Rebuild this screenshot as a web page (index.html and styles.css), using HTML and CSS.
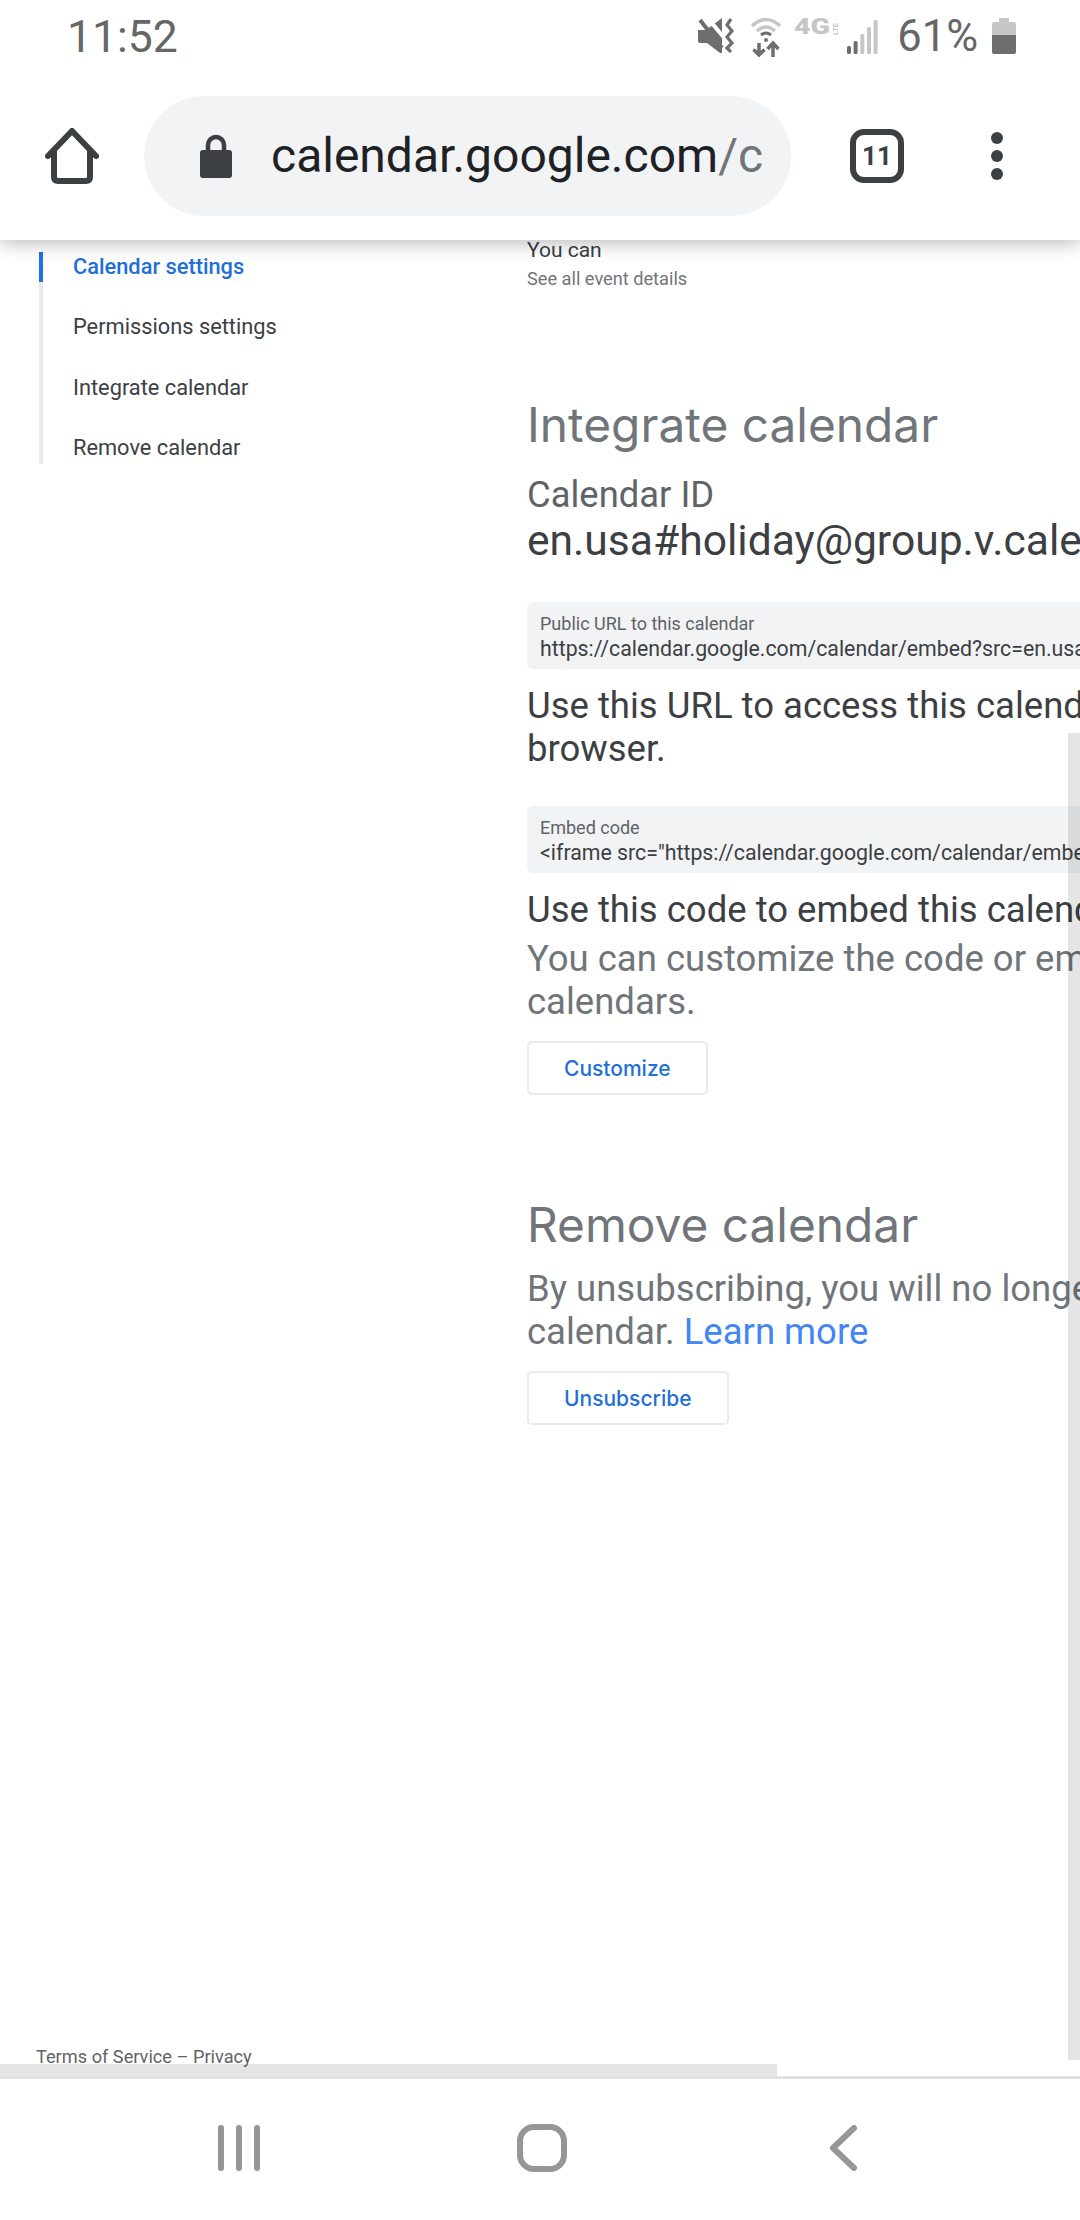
FILE: index.html
```html
<!DOCTYPE html>
<html lang="en">
	<head>
		<meta charset="UTF-8" />
		<meta name="viewport" content="width=device-width, initial-scale=1.0" />
		<title>Calendar settings</title>
		<link rel="stylesheet" href="styles.css">
	</head>
	<body>
		<header class="browser-top">
			<div class="status-bar">
				<span class="clock">11:52</span>
				<div class="status-icons">
					<svg class="icon-mute" width="36" height="35" viewBox="0 0 36 35">
						<path d="M0 12 H8 L24 0 V35 H22 L9 25 H2 Q0 25 0 23 Z" fill="#6e6e6e" />
						<path d="M8 -2 L28 22" stroke="#fff" stroke-width="4" />
						<path d="M2 2 L24 30" stroke="#6e6e6e" stroke-width="4" />
						<path d="M33 1 L29 7 L34 13 L29 19 L34 25 L29 30 L33 34" fill="none" stroke="#6e6e6e" stroke-width="3.2" />
					</svg>
					<svg class="icon-wifi" width="32" height="41" viewBox="0 0 32 41">
						<path d="M2 10 Q16 -3 30 10" fill="none" stroke="#c6c6c6" stroke-width="3.5" />
						<path d="M7 15 Q16 7 25 15" fill="none" stroke="#c6c6c6" stroke-width="3.5" />
						<path d="M11 19 Q16 15 21 19" fill="none" stroke="#6e6e6e" stroke-width="3" />
						<circle cx="16" cy="24" r="2" fill="#6e6e6e" />
						<path d="M9 27 V39 M3.5 33.5 L9 39 L14.500 33.5" fill="none" stroke="#6e6e6e" stroke-width="3.500" />
						<path d="M23 41 V28 M17.5 33 L23 27 L28.500 33" fill="none" stroke="#6e6e6e" stroke-width="3.500" />
					</svg>
					<div class="network-type">
						<span class="network-4g">4G</span>
						<span class="network-lte">LTE</span>
					</div>
					<svg class="icon-signal" width="31" height="34" viewBox="0 0 31 34">
						<rect x="0" y="26" width="4" height="8" rx="1.5" fill="#6e6e6e" />
						<rect x="6.6" y="21" width="4" height="13" rx="1.500" fill="#6e6e6e" />
						<rect x="13.300" y="14" width="4" height="20" rx="1.500" fill="#c6c6c6" />
						<rect x="20" y="7" width="4" height="27" rx="1.500" fill="#c6c6c6" />
						<rect x="26.600" y="0" width="4" height="34" rx="1.500" fill="#c6c6c6" />
					</svg>
					<span class="battery-level">61%</span>
					<svg class="icon-battery" width="24" height="36" viewBox="0 0 24 36">
						<path d="M7 0 H17 V4 H22 Q24 4 24 6 V17 H0 V6 Q0 4 2 4 H7 Z" fill="#c6c6c6" />
						<path d="M0 17 H24 V34 Q24 36 22 36 H2 Q0 36 0 34 Z" fill="#6e6e6e" />
					</svg>
				</div>
			</div>
			<div class="toolbar">
				<svg class="icon-home" width="54" height="56" viewBox="0 0 54 56">
					<path d="M3 28 L27 3 L51 28 M9 23 V49 Q9 53 13 53 H41 Q45 53 45 49 V23" fill="none" stroke="#3c4043" stroke-width="6" stroke-linecap="round" stroke-linejoin="round" />
				</svg>
				<div class="address-bar">
					<svg class="icon-lock" width="32" height="44" viewBox="0 0 32 44">
						<path d="M8 18 V11 A8 8 0 0 1 24 11 V18" fill="none" stroke="#3c4043" stroke-width="4.500" />
						<rect x="0" y="16" width="32" height="28" rx="3" fill="#3c4043" />
					</svg>
					<span class="url">calendar.google.com<span class="url-rest">/c</span></span>
				</div>
				<div class="tab-count">11</div>
				<div class="menu-dots">
					<span class="dot"></span>
					<span class="dot"></span>
					<span class="dot"></span>
				</div>
			</div>
		</header>

		<div class="page">
			<aside class="sidebar">
				<nav class="side-nav">
					<a class="side-link active">Calendar settings</a>
					<a class="side-link">Permissions settings</a>
					<a class="side-link">Integrate calendar</a>
					<a class="side-link">Remove calendar</a>
				</nav>
				<div class="legal">Terms of Service – Privacy</div>
			</aside>

			<main class="content">
				<div class="you-can">You can</div>
				<div class="you-can-detail">See all event details</div>

				<section class="section-integrate">
					<h2 class="section-title">Integrate calendar</h2>
					<div class="field-label">Calendar ID</div>
					<div class="calendar-id">en.usa#holiday@group.v.calendar.google.com</div>

					<div class="copy-box">
						<div class="copy-label">Public URL to this calendar</div>
						<div class="copy-value">https://calendar.google.com/calendar/embed?src=en.usa%23holiday%40group.v.calendar.google.com</div>
					</div>
					<p class="help-strong">Use this URL to access this calendar from a web browser.</p>

					<div class="copy-box embed-box">
						<div class="copy-label">Embed code</div>
						<div class="copy-value">&lt;iframe src="https://calendar.google.com/calendar/embed?src=en.usa%23holiday%40group.v.calendar.google.com"</div>
					</div>
					<p class="help-strong help-embed">Use this code to embed this calendar in a web page.</p>
					<p class="help-muted">You can customize the code or embed multiple calendars.</p>
					<button class="outline-btn">Customize</button>
				</section>

				<section class="section-remove">
					<h2 class="section-title">Remove calendar</h2>
					<p class="help-muted remove-text">By unsubscribing, you will no longer have access to this calendar. <a class="learn-more">Learn more</a></p>
					<button class="outline-btn">Unsubscribe</button>
				</section>
			</main>

			<div class="scrollbar-v"></div>
			<div class="scrollbar-h"></div>
		</div>

		<footer class="nav-bar">
			<svg width="42" height="46" viewBox="0 0 42 46">
				<path d="M3 3 V43 M21 3 V43 M39 3 V43" stroke="#969696" stroke-width="6" stroke-linecap="round" />
			</svg>
			<svg class="nav-home" width="50" height="48" viewBox="0 0 50 48">
				<rect x="3" y="3" width="44" height="42" rx="14" fill="none" stroke="#969696" stroke-width="6" />
			</svg>
			<svg width="28" height="46" viewBox="0 0 28 46">
				<path d="M25 3 L4 23 L25 43" fill="none" stroke="#969696" stroke-width="6" stroke-linecap="round" stroke-linejoin="round" />
			</svg>
		</footer>
	</body>
</html>
```
FILE: styles.css
```css
* {
	box-sizing: border-box;
}

body {
	margin: 0;
	width: 1080px;
	height: 2220px;
	overflow: hidden;
	background: #fff;
	font-family: Roboto, sans-serif;
	color: #3c4043;
}

.browser-top {
	position: relative;
	z-index: 2;
	height: 240px;
	background: #fff;
	box-shadow: 0 3px 18px rgba(0, 0, 0, 0.28);
}

.status-bar {
	display: flex;
	align-items: flex-start;
	height: 72px;
	padding: 10px 0 0 67px;
}

.clock {
	font-size: 44.5px;
	line-height: 54px;
	color: #666;
}

.status-icons {
	display: flex;
	align-items: flex-start;
	margin-left: auto;
	padding-right: 64px;
}

.icon-mute {
	margin-top: 8px;
}

.icon-wifi {
	margin: 6px 0 0 16px;
}

.network-type {
	display: flex;
	margin: 4px 0 0 12px;
	width: 45px;
	color: #c6c6c6;
}

.network-4g {
	flex: none;
	width: 38px;
	font-size: 22px;
	line-height: 26px;
	font-weight: 900;
	transform: scaleX(1.3);
	transform-origin: left center;
}

.network-lte {
	writing-mode: vertical-rl;
	transform: rotate(180deg);
	font-size: 7.5px;
	line-height: 7px;
	height: 16px;
	margin-top: 5px;
	font-weight: 700;
}

.icon-signal {
	margin: 10px 0 0 8px;
}

.battery-level {
	margin-left: 19px;
	font-size: 43.5px;
	line-height: 54px;
	color: #666;
}

.icon-battery {
	margin: 8px 0 0 14px;
}

.toolbar {
	display: flex;
	align-items: center;
	height: 168px;
	padding: 0 0 0 45px;
}

.address-bar {
	display: flex;
	align-items: center;
	width: 647px;
	height: 120px;
	margin-left: 45px;
	padding-left: 56px;
	background: #f1f3f4;
	border-radius: 60px;
}

.url {
	margin-left: 39px;
	font-size: 48px;
	line-height: 54px;
	color: #202124;
	white-space: nowrap;
}

.url-rest {
	color: #70757a;
}

.tab-count {
	width: 54px;
	height: 54px;
	margin-left: 59px;
	border: 6px solid #3c4043;
	border-radius: 14px;
	font-size: 26px;
	font-weight: 700;
	line-height: 42px;
	text-align: center;
}

.menu-dots {
	display: flex;
	flex-direction: column;
	gap: 6px;
	margin-left: 87px;
}

.dot {
	width: 12px;
	height: 12px;
	border-radius: 50%;
	background: #3c4043;
}

.page {
	position: relative;
	display: flex;
	height: 1836px;
	overflow: hidden;
}

.sidebar {
	display: flex;
	flex-direction: column;
	flex: none;
	width: 527px;
}

.side-nav {
	display: flex;
	flex-direction: column;
	flex: none;
	margin: 12px 0 0 39px;
	height: 212px;
	border-left: 4px solid #e8eaed;
}

.side-link {
	position: relative;
	flex: none;
	height: 60.3px;
	padding-left: 30px;
	font-size: 21.8px;
	line-height: 30px;
	color: #3c4043;
}

.side-link.active {
	font-weight: 500;
	color: #1f6fd8;
}

.side-link.active::before {
	content: '';
	position: absolute;
	left: -4px;
	top: 0;
	width: 4px;
	height: 30px;
	background: #1a73e8;
}

.legal {
	margin: auto 0 7px 36px;
	font-size: 18.2px;
	line-height: 24px;
	color: #5f6368;
}

.content {
	flex: none;
	width: 860px;
}

.you-can {
	font-size: 21px;
	line-height: 20px;
}

.you-can-detail {
	margin-top: 7px;
	font-size: 18.2px;
	line-height: 24px;
	color: #70757a;
}

.section-integrate {
	margin-top: 106px;
}

.section-title {
	margin: 0;
	font-family: Inter, Roboto, sans-serif;
	font-size: 47.8px;
	line-height: 56px;
	font-weight: 400;
	color: #70757a;
}

.field-label {
	margin-top: 20px;
	font-size: 36.4px;
	line-height: 44px;
	color: #5f6368;
}

.calendar-id {
	font-size: 42.6px;
	line-height: 47px;
	white-space: nowrap;
}

.copy-box {
	margin-top: 38px;
	height: 67px;
	padding: 9px 0 0 13px;
	background: #f1f3f4;
	border-radius: 6px 0 0 6px;
	white-space: nowrap;
}

.copy-label {
	font-size: 18px;
	line-height: 25px;
	color: #5f6368;
}

.copy-value {
	font-size: 21.3px;
	line-height: 26px;
}

.help-strong {
	margin: 15px 0 0;
	font-size: 36.5px;
	line-height: 43px;
}

.embed-box {
	margin-top: 36px;
}

.help-embed {
	white-space: nowrap;
}

.help-muted {
	margin: 6px 0 0;
	font-size: 36.5px;
	line-height: 43px;
	color: #70757a;
}

.outline-btn {
	display: block;
	height: 54px;
	margin-top: 18px;
	padding: 0 35px;
	background: #fff;
	border: 2px solid #e8eaed;
	border-radius: 5px;
	font-family: Inter, Roboto, sans-serif;
	font-size: 21px;
	font-weight: 500;
	color: #1f6fd8;
}

.section-remove {
	margin-top: 102px;
}

.remove-text {
	width: 950px;
	margin-top: 14px;
	margin-bottom: 18px;
}

.learn-more {
	color: #4285f4;
}

.scrollbar-v {
	position: absolute;
	top: 493px;
	right: 0;
	width: 12px;
	height: 1327px;
	background: rgba(0, 0, 0, 0.1);
}

.scrollbar-h {
	position: absolute;
	left: 0;
	bottom: 0;
	width: 777px;
	height: 12px;
	background: rgba(0, 0, 0, 0.1);
}

.nav-bar {
	display: flex;
	justify-content: space-between;
	align-items: center;
	height: 144px;
	padding: 0 223px 3px 218px;
	border-top: 3px solid #e0e0e0;
	background: #fff;
}

.nav-home {
	margin: 0 3px 0 -3px;
}
```
